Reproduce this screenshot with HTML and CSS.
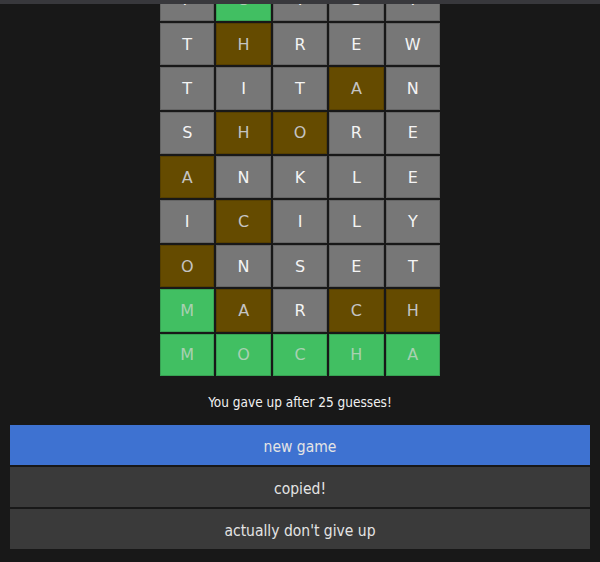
FILE: index.html
```html
<!DOCTYPE html>
<html>
<head>
<meta charset="utf-8">
<link rel="stylesheet" href="styles.css">
</head>
<body>
<div class="topbar"></div>
<div class="board-view">
  <div class="board">
    <div class="cell absent">F</div><div class="cell correct">O</div><div class="cell absent">I</div><div class="cell absent">S</div><div class="cell absent">T</div>
    <div class="cell absent">T</div><div class="cell present">H</div><div class="cell absent">R</div><div class="cell absent">E</div><div class="cell absent">W</div>
    <div class="cell absent">T</div><div class="cell absent">I</div><div class="cell absent">T</div><div class="cell present">A</div><div class="cell absent">N</div>
    <div class="cell absent">S</div><div class="cell present">H</div><div class="cell present">O</div><div class="cell absent">R</div><div class="cell absent">E</div>
    <div class="cell present">A</div><div class="cell absent">N</div><div class="cell absent">K</div><div class="cell absent">L</div><div class="cell absent">E</div>
    <div class="cell absent">I</div><div class="cell present">C</div><div class="cell absent">I</div><div class="cell absent">L</div><div class="cell absent">Y</div>
    <div class="cell present">O</div><div class="cell absent">N</div><div class="cell absent">S</div><div class="cell absent">E</div><div class="cell absent">T</div>
    <div class="cell correct">M</div><div class="cell present">A</div><div class="cell absent">R</div><div class="cell present">C</div><div class="cell present">H</div>
    <div class="cell correct">M</div><div class="cell correct">O</div><div class="cell correct">C</div><div class="cell correct">H</div><div class="cell correct">A</div>
  </div>
</div>
<div class="message">You gave up after 25 guesses!</div>
<div class="actions">
  <button class="btn primary">new game</button>
  <button class="btn">copied!</button>
  <button class="btn">actually don't give up</button>
</div>
</body>
</html>
```
FILE: styles.css
```css
html, body {
  margin: 0;
  padding: 0;
  background: #181818;
  height: 100%;
  overflow: hidden;
}
body {
  font-family: "DejaVu Sans Condensed", "Liberation Sans", sans-serif;
  color: #e8e8e8;
}
.topbar {
  height: 4px;
  background: #38383c;
}
.board-view {
  height: 372px;
  overflow: hidden;
  display: flex;
  flex-direction: column;
  justify-content: flex-end;
  align-items: center;
}
.board {
  display: grid;
  grid-template-columns: repeat(5, 54.4px);
  grid-auto-rows: 42.4px;
  gap: 2px;
  flex-shrink: 0;
}
.cell {
  display: flex;
  align-items: center;
  justify-content: center;
  font-family: "DejaVu Sans", sans-serif;
  font-size: 16px;
  box-shadow: inset 0 0 0 1px rgba(0,0,0,0.15);
}
.absent { background: #777777; color: #f4f4f4; }
.present { background: #654b00; color: #c4c4c4; }
.correct { background: #41bf62; color: #a9d0b2; }
.message {
  height: 49px;
  box-sizing: border-box;
  padding-top: 3px;
  display: flex;
  align-items: center;
  justify-content: center;
  font-size: 13.5px;
  color: #f0f0f0;
}
.actions {
  display: flex;
  flex-direction: column;
  gap: 2px;
  padding: 0 10px;
}
.btn {
  height: 40px;
  border: none;
  margin: 0;
  padding: 3px 0 0;
  background: #3a3a3a;
  color: #e4e4e4;
  font-family: inherit;
  font-size: 15.5px;
}
.btn.primary {
  background: #3e72d1;
}
```
